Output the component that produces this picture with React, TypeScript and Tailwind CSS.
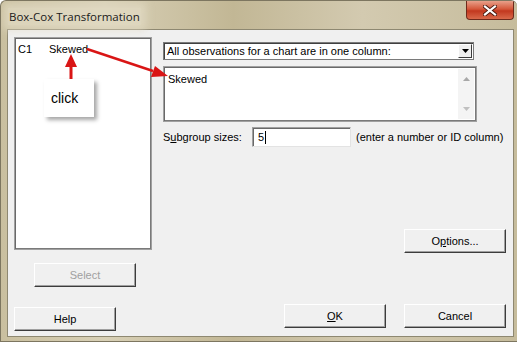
import React from "react";

const font = { fontFamily: "Tahoma, 'Liberation Sans', Arial, sans-serif" };

function Btn({ children, disabled, className = "" }: { children: React.ReactNode; disabled?: boolean; className?: string }) {
  return (
    <div
      className={`flex h-[24px] shrink-0 items-center justify-center border border-t-white border-l-white border-r-[#3c3c3c] border-b-[#3c3c3c] bg-[#f0f0f0] text-[11px] shadow-[inset_-1px_-1px_0_#a0a0a0] ${
        disabled ? "text-[#a0a0a0]" : "text-black"
      } ${className}`}
    >
      {children}
    </div>
  );
}

export default function App() {
  return (
    <div
      className="relative h-[342px] w-[517px] overflow-hidden rounded-t-[6px] border border-r-0 border-[#7d7660] bg-[linear-gradient(90deg,#c9bf9f_0%,#d8d0b6_20%,#c2b795_45%,#d3cab0_70%,#c6bc9c_100%)]"
      style={font}
    >
      {/* title bar */}
      <div className="flex h-[28px] items-start justify-between pl-[7px] pr-[3px]">
        <span
          className="mt-[7px] bg-[#e2dbc5]/70 px-[1px] text-[11.5px] text-[#1a1a1a] shadow-[0_0_8px_5px_rgba(226,219,197,0.7)]"
          style={{ fontFamily: "'Open Sans', 'Noto Sans', sans-serif" }}
        >
          Box-Cox Transformation
        </span>
        <div className="flex h-[19px] w-[48px] items-center justify-center rounded-b-[4px] border border-t-0 border-[#6e2a1c] bg-[linear-gradient(180deg,#e8a08a_0%,#d4573a_45%,#c2381f_55%,#d9694a_100%)]">
          <svg width="14" height="11" viewBox="0 0 14 11">
            <path d="M2 1.5 L12 9.5 M12 1.5 L2 9.5" stroke="#4a1a10" strokeWidth="4" strokeLinecap="square" />
            <path d="M2 1.5 L12 9.5 M12 1.5 L2 9.5" stroke="#ffffff" strokeWidth="2.2" strokeLinecap="square" />
          </svg>
        </div>
      </div>

      {/* client area */}
      <div className="ml-[6px] mr-[3px] flex h-[308px] gap-[11px] border border-[#8e8871] bg-[#f0f0f0] px-[6px] pt-[7px] text-[11px] text-black">
        {/* left column */}
        <div className="flex w-[138px] shrink-0 flex-col">
          <div className="h-[213px] border border-[#a0a0a0] bg-white shadow-[inset_1px_1px_0_#696969,inset_-1px_-1px_0_#7a7a7a]">
            <div className="flex pl-[3px] pt-[3px]">
              <span className="w-[31px]">C1</span>
              <span>Skewed</span>
            </div>
          </div>
          <Btn disabled className="ml-[20px] mt-[13px] w-[102px]">
            Select
          </Btn>
          <Btn className="mt-[20px] w-[102px]">Help</Btn>
        </div>

        {/* right column */}
        <div className="flex w-[343px] shrink-0 flex-col pt-[5px]">
          <div className="flex h-[18px] w-[311px] items-center border border-[#7a7a7a] bg-white shadow-[inset_1px_1px_0_#404040]">
            <span className="flex-1 truncate pl-[3px]">All observations for a chart are in one column:</span>
            <div className="mr-[1px] flex h-[14px] w-[14px] items-center justify-center border border-t-white border-l-white border-r-[#3c3c3c] border-b-[#3c3c3c] bg-[#f0f0f0]">
              <svg width="7" height="4" viewBox="0 0 7 4">
                <path d="M0 0 H7 L3.5 4 Z" fill="#000" />
              </svg>
            </div>
          </div>

          <div className="mt-[6px] flex h-[56px] w-[314px] border border-[#a0a0a0] bg-white shadow-[inset_1px_1px_0_#696969,inset_-1px_-1px_0_#7a7a7a]">
            <span className="flex-1 pl-[4px] pt-[4px]">Skewed</span>
            <div className="my-[2px] mr-[2px] flex w-[16px] flex-col items-center justify-between bg-[#f4f4f4] py-[8px]">
              <svg width="7" height="4" viewBox="0 0 7 4">
                <path d="M0 4 H7 L3.5 0 Z" fill="#a8a8a8" />
              </svg>
              <svg width="7" height="4" viewBox="0 0 7 4">
                <path d="M0 0 H7 L3.5 4 Z" fill="#c0c0c0" />
              </svg>
            </div>
          </div>

          <div className="mt-[5px] flex h-[20px] items-center">
            <span className="w-[89px] shrink-0">
              S<span className="underline">u</span>bgroup sizes:
            </span>
            <div className="flex h-[20px] w-[99px] shrink-0 items-center border border-t-[#a0a0a0] border-l-[#a0a0a0] border-r-[#e3e3e3] border-b-[#e3e3e3] bg-white shadow-[inset_1px_1px_0_#696969]">
              <span className="pl-[5px]">5</span>
              <span className="ml-[1px] h-[13px] w-[1px] bg-black" />
            </div>
            <span className="ml-[5px] whitespace-nowrap">(enter a number or ID column)</span>
          </div>

          <Btn className="ml-[241px] mt-[82px] w-[102px]">
            O<span className="underline">p</span>tions...
          </Btn>

          <div className="mt-[51px] flex gap-[18px] pl-[121px]">
            <Btn className="w-[102px]">
              <span className="underline">O</span>K
            </Btn>
            <Btn className="w-[102px]">Cancel</Btn>
          </div>
        </div>
      </div>

      {/* tutorial annotation */}
      <div
        className="absolute left-[43px] top-[78px] flex h-[38px] w-[50px] items-center bg-white pl-[7px] text-[14px] shadow-[3px_3px_4px_rgba(0,0,0,0.35)]"
        style={{ fontFamily: "'Liberation Sans', Arial, sans-serif" }}
      >
        click
      </div>
      <svg className="pointer-events-none absolute left-0 top-0" width="517" height="342" viewBox="0 0 517 342">
        <g fill="#d91515" stroke="#d91515">
          <line x1="70" y1="78" x2="70" y2="63" strokeWidth="3" />
          <path d="M70 53 L76 66 L64 66 Z" stroke="none" />
          <line x1="86" y1="48" x2="152" y2="70" strokeWidth="2.5" />
          <path d="M167 75 L150 76 L154 65 Z" stroke="none" />
        </g>
      </svg>
    </div>
  );
}
